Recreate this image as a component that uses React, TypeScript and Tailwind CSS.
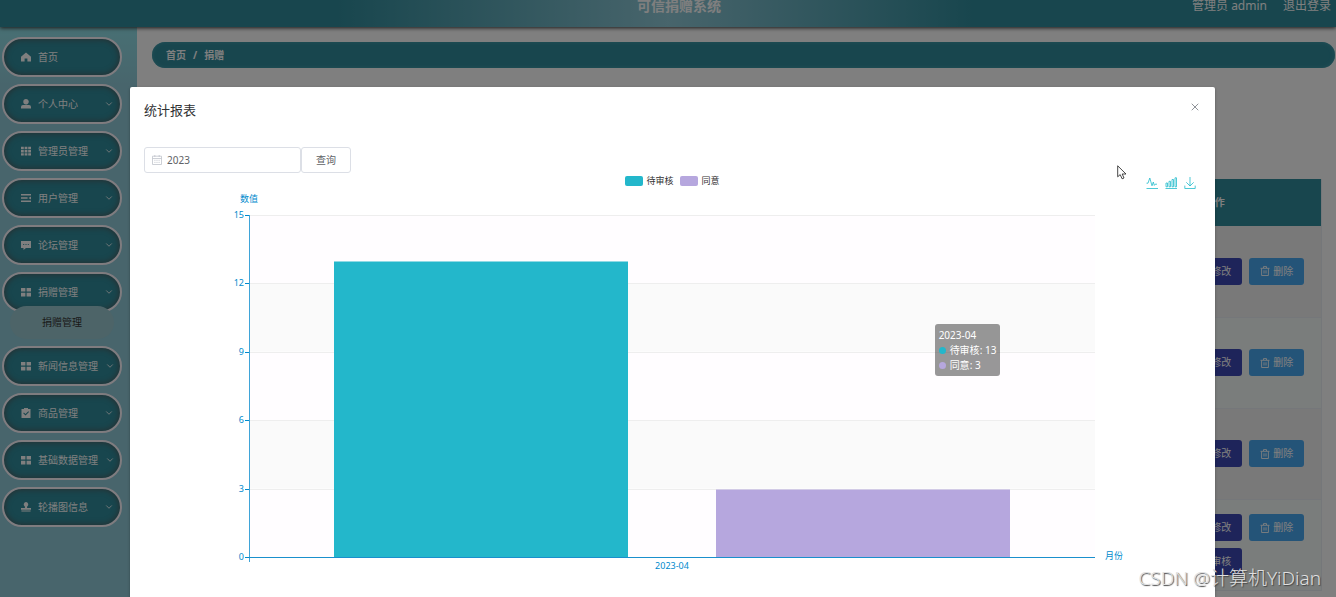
import { useState } from "react";
import { ChevronDown, X } from "lucide-react";

type IconName = "home" | "user" | "grid" | "list" | "chat" | "blocks" | "clip" | "stamp";

const menu: { icon: IconName; label: string; child?: string }[] = [
  { icon: "home", label: "首页" },
  { icon: "user", label: "个人中心" },
  { icon: "grid", label: "管理员管理" },
  { icon: "list", label: "用户管理" },
  { icon: "chat", label: "论坛管理" },
  { icon: "blocks", label: "捐赠管理", child: "捐赠管理" },
  { icon: "blocks", label: "新闻信息管理" },
  { icon: "clip", label: "商品管理" },
  { icon: "blocks", label: "基础数据管理" },
  { icon: "stamp", label: "轮播图信息" },
];

function MenuIcon({ name }: { name: IconName }) {
  const paths: Record<IconName, string> = {
    home: "M5 .5 0 4.8V9.5h3.6V6.6h2.8v2.9H10V4.8z",
    user: "M5 0a2.7 2.7 0 0 1 1.6 4.9A2.7 2.7 0 0 1 5 5.4 2.7 2.7 0 0 1 5 0zM2 6h6Q10 6 10 8v1.5H0V8Q0 6 2 6z",
    grid: "M0 .8h2.8v2.4H0zM3.6 .8h2.8v2.4H3.6zM7.2 .8H10v2.4H7.2zM0 4h2.8v2.4H0zM3.6 4h2.8v2.4H3.6zM7.2 4H10v2.4H7.2zM0 7.2h2.8v2.2H0zM3.6 7.2h2.8v2.2H3.6zM7.2 7.2H10v2.2H7.2z",
    list: "M0 1h10v1.5H0zM0 4.2h6.6v1.5H0zM10 3.4V6.5L7.4 5zM0 7.5h10V9H0z",
    chat: "M0 1h10v7H5L2.5 10V8H0zM2.2 4v1h1V4zM4.5 4v1h1V4zM6.8 4v1h1V4z",
    blocks: "M0 1h4.4v3.6H0zM5.6 1H10v3.6H5.6zM0 5.8h4.4v3.6H0zM5.6 5.8H10v3.6H5.6z",
    clip: "M.5 1H3V0h4v1h2.5v9h-9zM2.2 5.2l2.3 2.3 3.5-3.6-.7-.7-2.8 2.9L2.9 4.5z",
    stamp: "M5 0a2.4 2.4 0 0 1 1.3 4.3L6 6h4v1.8H0V6h4l-.3-1.7A2.4 2.4 0 0 1 5 0zM.4 8.5h9.2v1H.4z",
  };
  return (
    <svg viewBox="0 0 10 10" className="size-[10px] shrink-0" aria-hidden="true">
      <path d={paths[name]} fill="currentColor" fillRule="evenodd" />
    </svg>
  );
}

function Sidebar() {
  return (
    <nav className="w-[137px] shrink-0 bg-[#90cad8] bg-[linear-gradient(#90e0e8,#90cad8_60px)] pt-[10px] pl-[2px]">
      <ul className="flex w-[120px] flex-col gap-[7px]">
        {menu.map((m) => (
          <li key={m.label}>
            <button className="flex h-10 w-full items-center gap-[7px] rounded-full border-2 border-[#fff8ff] bg-[#308c9c] pr-[6px] pl-[17px] text-[10px] text-white shadow-[inset_0_0_6px_#555]">
              <MenuIcon name={m.icon} />
              <span className="whitespace-nowrap">{m.label}</span>
              {m.icon !== "home" && <ChevronDown className="ml-auto size-[10px] shrink-0" strokeWidth={2} />}
            </button>
            {m.child && (
              <a
                href="#donation"
                className="relative mx-2 -mt-[6px] flex h-[33px] items-center justify-center rounded-full bg-[#9ac8d0] text-[10px] text-[#333]"
              >
                {m.child}
              </a>
            )}
          </li>
        ))}
      </ul>
    </nav>
  );
}

function TrashIcon() {
  return (
    <svg viewBox="0 0 10 10" className="size-[10px]" fill="none" stroke="currentColor" aria-hidden="true">
      <path d="M.5 2.3h9M3.5 2V.6h3V2M1.6 2.5v7h6.8v-7M4 4.3v3.2M6 4.3v3.2" strokeWidth=".9" />
    </svg>
  );
}

function EditIcon() {
  return (
    <svg viewBox="0 0 10 10" className="size-[10px]" fill="none" stroke="currentColor" aria-hidden="true">
      <path d="M5 1H1v8h8V5M4 6l5-5" />
    </svg>
  );
}

const actionClass = "inline-flex h-[27px] w-[55px] items-center justify-center gap-[3px] rounded-[3px] text-[10px] text-white";

function ActionRow({ review, striped }: { review?: boolean; striped?: boolean }) {
  return (
    <tr className={striped ? "bg-[#f4faf9]" : "bg-[#f2f2f2]"}>
      <td className="border-b border-[#ebeef5]" />
      <td className="h-[91px] border-b border-[#ebeef5] px-4">
        <div className="flex flex-wrap justify-center gap-[7px]">
          <button className={`${actionClass} bg-[#48b0f0]`} aria-label="详情" />
          <button className={`${actionClass} bg-[#3c48b4]`}><EditIcon />修改</button>
          <button className={`${actionClass} bg-[#48a8f0]`}><TrashIcon />删除</button>
          {review && <button className={`${actionClass} bg-[#3c48b4]`}><EditIcon />审核</button>}
        </div>
      </td>
    </tr>
  );
}

function Page() {
  return (
    <div className="flex min-h-screen flex-col bg-white">
      <header className="relative z-10 grid h-[27px] grid-cols-3 bg-[#308c9c] bg-[linear-gradient(90deg,#308c9c_25%,#90cad8_50%,#308c9c_73%)] text-white shadow-[0_1px_4px_#333]">
        <span />
        <h1 className="-mt-1 pl-[22px] text-center text-sm leading-5 font-bold">可信捐赠系统</h1>
        <div className="-mt-1 flex justify-end gap-4 pr-[5px] text-xs leading-5">
          <span>管理员 admin</span>
          <a href="#logout">退出登录</a>
        </div>
      </header>
      <div className="flex flex-1">
        <Sidebar />
        <main className="min-w-0 flex-1 pt-[15px] pr-px pl-[15px]">
          <div className="flex h-[26px] items-center gap-[7px] rounded-full bg-[#308c9c] px-[14px] text-[10px] font-bold text-white shadow-[inset_0_0_4px_#48a0b0]">
            <a href="#home">首页</a>
            <span>/</span>
            <span>捐赠</span>
          </div>
          <div className="mt-[111px] pr-[13px]">
            <table className="w-full border-collapse border-r border-[#ebeef5]">
              <thead>
                <tr className="h-[47px] bg-[#308c9c] text-[10px] text-white">
                  <th />
                  <th className="w-[213px]">操作</th>
                </tr>
              </thead>
              <tbody>
                <ActionRow />
                <ActionRow striped />
                <ActionRow />
                <ActionRow striped review />
              </tbody>
            </table>
          </div>
        </main>
      </div>
    </div>
  );
}

const series = [
  { name: "待审核", value: 13, color: "#23b7cb", x: 190 },
  { name: "同意", value: 3, color: "#b6a7de", x: 572 },
];
const ticks = [15, 12, 9, 6, 3, 0];
const yOf = (v: number) => 366.5 - Math.round((v * 342) / 15);

function Chart() {
  return (
    <svg viewBox="0 0 1057 406" className="block w-full text-[9px]" role="img" aria-label="统计报表">
      {[0, 1, 2, 3, 4].map((i) => (
        <rect key={i} x="106" width="845" y={yOf(15 - i * 3)} height="68" fill={i % 2 ? "#fafafa" : "#fffdff"} />
      ))}
      {ticks.map((t) => (
        <g key={t}>
          <path d={`M106 ${yOf(t)}H951`} stroke="#eeeeee" />
          <path d={`M101 ${yOf(t)}H106`} stroke="#008acd" />
          <text x="100" y={yOf(t) + 2} textAnchor="end" fill="#008acd">{t}</text>
        </g>
      ))}
      {series.map((s) => (
        <rect key={s.name} x={s.x} width="294" y={yOf(s.value)} height={366.5 - yOf(s.value)} fill={s.color} />
      ))}
      <rect x="105" y="24" width="1" height="347" fill="#3fa4d8" />
      <rect x="105" y="366" width="846" height="1" fill="#1a8fcd" />
      <text x="105" y="11" textAnchor="middle" fill="#008acd">数值</text>
      <text x="961" y="368" fill="#008acd">月份</text>
      <text x="528" y="378" textAnchor="middle" fill="#008acd">2023-04</text>
    </svg>
  );
}

function ToolIcon({ d }: { d: string }) {
  return (
    <svg viewBox="0 0 12 12" className="size-3" fill="none" stroke="#22bbcc" strokeWidth=".8" aria-hidden="true">
      <path d={d} />
    </svg>
  );
}

function ReportDialog() {
  const [year, setYear] = useState("2023");
  return (
    <section
      role="dialog"
      aria-labelledby="report-title"
      className="flex-1 rounded-t-[2px] bg-white px-[14px] pt-[14px] shadow-[0_1px_3px_rgba(0,0,0,0.3)]"
    >
      <div className="flex h-5 items-center justify-between">
        <h2 id="report-title" className="text-[13px] text-[#303133]">统计报表</h2>
        <button aria-label="关闭" className="-mt-2 text-[#909399]"><X className="size-3" strokeWidth={2} /></button>
      </div>
      <form className="mt-[26px] flex text-[10px] text-[#606266]" onSubmit={(e) => e.preventDefault()}>
        <label className="flex h-[26px] w-[157px] items-center gap-[5px] rounded-[3px] border border-[#dcdfe6] pl-[7px]">
          <svg viewBox="0 0 10 10" className="size-[10px] shrink-0" fill="none" stroke="#c0c4cc" strokeWidth=".8" aria-hidden="true">
            <path d="M.5 1.2h9v8.3h-9zM.5 3.5h9M2.8 0v2M7.2 0v2M2.3 5.3h1.2M4.4 5.3h1.2M6.5 5.3h1.2M2.3 7.4h1.2M4.4 7.4h1.2M6.5 7.4h1.2" />
          </svg>
          <input aria-label="年份" className="w-full min-w-0 bg-transparent outline-none" value={year} onChange={(e) => setYear(e.target.value)} />
        </label>
        <button className="h-[26px] w-[50px] rounded-[3px] border border-[#dcdfe6]">查询</button>
      </form>
      <div className="relative">
        <div className="grid h-[18px] grid-cols-3 items-start text-[9px] text-[#333]">
          <span />
          <div className="flex h-4 items-center justify-center gap-[7px]">
            {series.map((s) => (
              <button key={s.name} className="flex items-center gap-[3px]">
                <svg viewBox="0 0 18 10" className="h-[10px] w-[18px]" aria-hidden="true">
                  <rect width="18" height="10" rx="2" fill={s.color} />
                </svg>
                {s.name}
              </button>
            ))}
          </div>
          <div className="flex h-5 items-center justify-end gap-[7px] pr-[5px]">
            <button aria-label="折线图"><ToolIcon d="M.5 11.5H12M.5 6.2H2L3.8 1l2.2 7.8L7.3 5l1 3.4.9-1.2H11" /></button>
            <button aria-label="柱状图"><ToolIcon d="M.5 11.5H12M1 6h1.5v3.8H1zM4 4.3h1.5v5.5H4zM7 2.5h1.5v7.3H7zM10 .8h1.5v9H10z" /></button>
            <button aria-label="下载"><ToolIcon d="M.8 8.6v2.9h10.4V8.6M6 0v9M2.3 5.3 6 9l3.7-3.7" /></button>
          </div>
        </div>
        <Chart />
        <div className="absolute top-[151px] left-[74.8%] rounded-[3px] bg-[#323232]/50 px-1 pt-1 pb-[3px] text-[10px] leading-[15px] whitespace-nowrap text-white">
          <div>2023-04</div>
          {series.map((s) => (
            <div key={s.name} className="flex items-center gap-1">
              <svg viewBox="0 0 7 7" className="size-[7px]" aria-hidden="true"><circle cx="3.5" cy="3.5" r="3.5" fill={s.color} /></svg>
              {s.name}: {s.value}
            </div>
          ))}
        </div>
      </div>
    </section>
  );
}

export default function App() {
  return (
    <div className="relative h-screen overflow-hidden font-['Noto_Sans','Noto_Sans_CJK_SC',sans-serif]">
      <Page />
      <div className="absolute inset-0 z-20 flex bg-black/50 pt-[87px] pr-[121px] pl-[130px]">
        <ReportDialog />
      </div>
      <svg viewBox="0 0 10 15" className="absolute top-[165px] left-[83.6%] z-30 h-[15px] w-[10px]" aria-hidden="true">
        <path d="M.7.8v11l2.5-2.2 1.9 4.2 1.9-.8-1.8-4H9z" fill="#fff" stroke="#333" strokeWidth=".9" />
      </svg>
      <div className="absolute right-[15px] bottom-[5px] z-30 text-[19px] leading-7 font-light text-[#e0e0e0] [text-shadow:1px_1px_1px_#444]">
        CSDN @计算机YiDian
      </div>
    </div>
  );
}
